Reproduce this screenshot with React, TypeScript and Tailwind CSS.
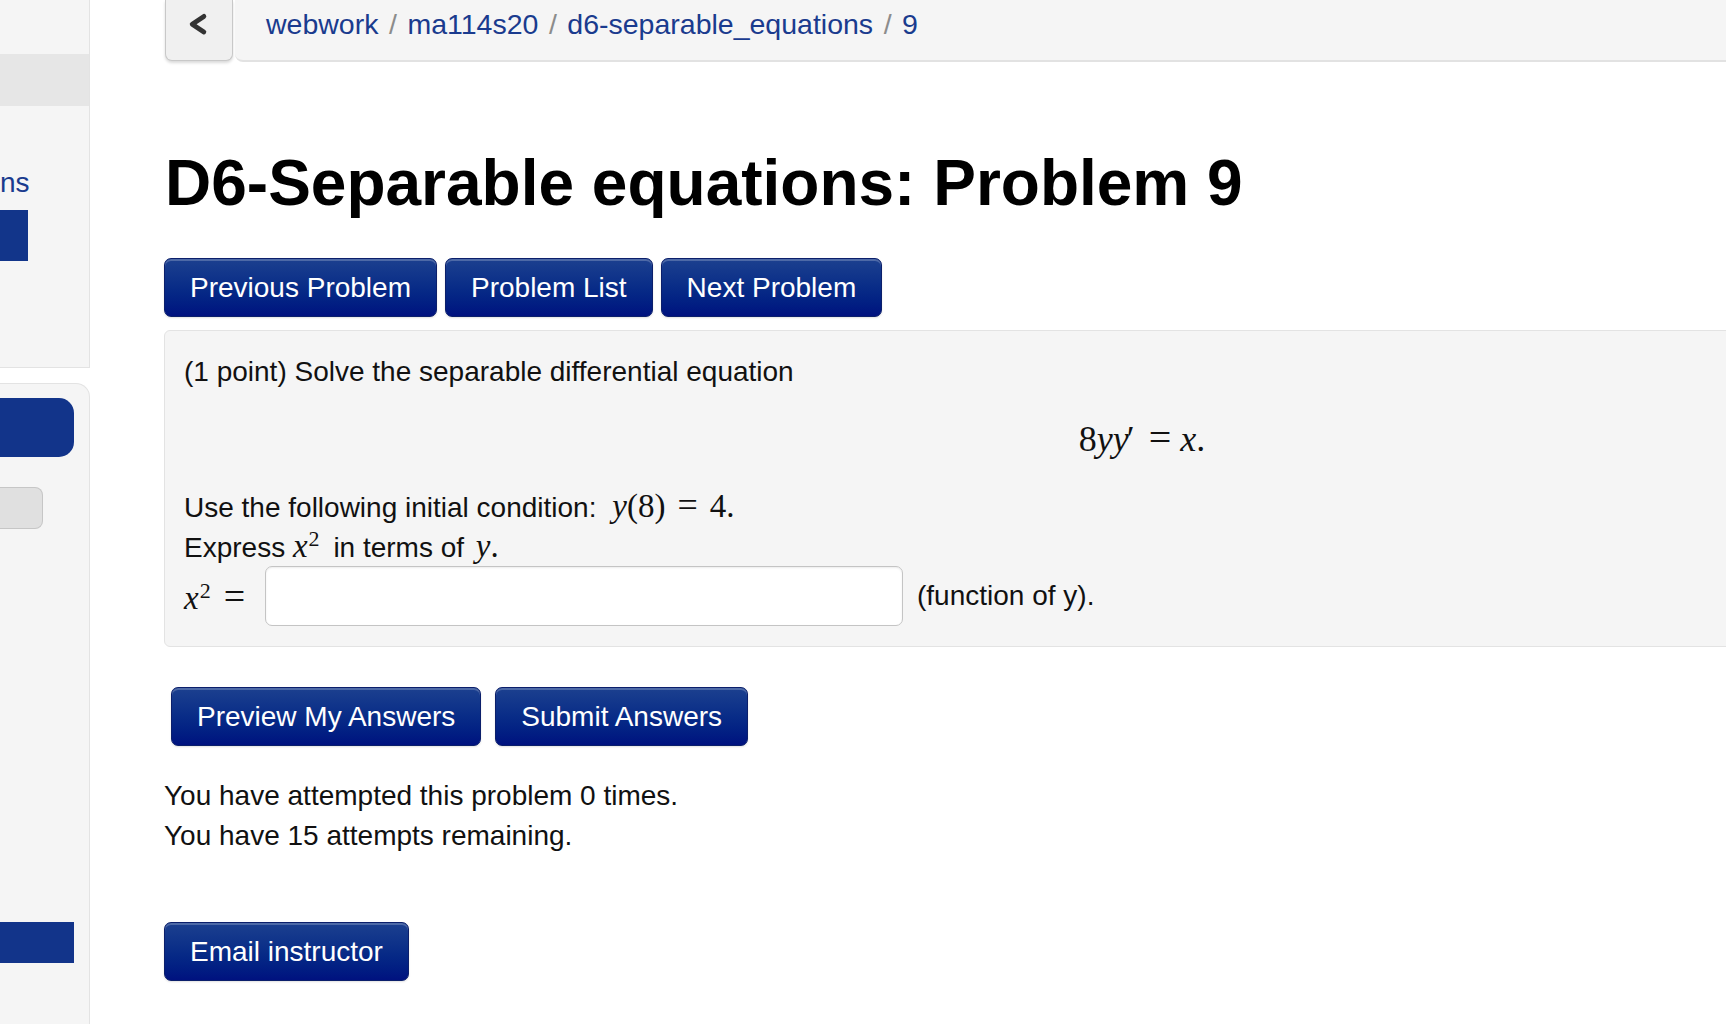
import React from "react";

const sans = "font-['Liberation_Sans',Arial,Helvetica,sans-serif]";
const serif = "font-['Liberation_Serif','Times_New_Roman',serif]";

function NavyButton({ children }: { children: React.ReactNode }) {
  return (
    <button
      className={`${sans} h-[59px] px-[25px] rounded-[7px] border border-[#0b1f6b] bg-linear-to-b from-[#1c408f] to-[#00117f] text-white text-[28px] leading-none shadow-[inset_0_2px_0_rgba(255,255,255,0.22),0_1px_2px_rgba(0,0,0,0.12)] whitespace-nowrap`}
    >
      {children}
    </button>
  );
}

function Sep() {
  return <span className="px-[10.5px] text-[#8c8c8c]">/</span>;
}

function I({ children }: { children: React.ReactNode }) {
  return <span className="italic">{children}</span>;
}

export default function App() {
  return (
    <div className={`${sans} w-[1726px] h-[1024px] overflow-hidden bg-white flex text-[#111]`}>
      {/* Sidebar */}
      <aside className="w-[90px] shrink-0 flex flex-col">
        <div className="h-[368px] bg-[#f5f5f5] border-r border-b border-[#e3e3e3] pt-[54px] flex flex-col">
          <div className="h-[52px] bg-[#e6e6e6]" />
          <div className="mt-[57px] text-[28px] leading-[40px] text-[#1a3b8e]">ns</div>
          <div className="mt-[7px] w-[28px] h-[51px] bg-[#12358a]" />
        </div>
        <div className="mt-[15px] flex-1 bg-[#f5f5f5] border-r border-t border-[#e3e3e3] rounded-tr-[14px] pt-[14px] flex flex-col">
          <div className="w-[74px] h-[59px] bg-[#12348a] rounded-r-[15px]" />
          <div className="mt-[30px] w-[43px] h-[42px] bg-[#e0e0e0] border border-[#c6c6c6] border-l-0 rounded-r-[8px]" />
          <div className="mt-[393px] w-[74px] h-[41px] bg-[#12348a]" />
        </div>
      </aside>

      {/* Main column */}
      <main className="ml-[74px] w-[1956px] shrink-0 flex flex-col">
        {/* Breadcrumb */}
        <div className="flex h-[62px]">
          <div className="ml-[1px] w-[68px] h-[61px] bg-[#f0f0f0] border border-t-0 border-[#c8c8c8] rounded-b-[7px] shadow-[0_2px_3px_rgba(0,0,0,0.15)]">
            <svg viewBox="0 0 68 61" className="w-full h-full">
              <polyline
                points="39,16.5 27,24.5 39,32.5"
                fill="none"
                stroke="#333"
                strokeWidth="5"
                strokeLinecap="round"
                strokeLinejoin="round"
              />
            </svg>
          </div>
          <div className="ml-[2px] flex-1 h-[62px] bg-[#f5f5f5] border-b-2 border-[#e2e2e2] rounded-bl-[8px] pl-[31px] pt-[4px] text-[28.5px] leading-[40px] text-[#1a3b8e] whitespace-nowrap">
            <span>webwork</span>
            <Sep />
            <span>ma114s20</span>
            <Sep />
            <span>d6-separable_equations</span>
            <Sep />
            <span>9</span>
          </div>
        </div>

        {/* Title */}
        <h1 className="mt-[89px] ml-[1px] text-[64px] leading-[64px] font-bold text-black whitespace-nowrap">
          D6-Separable equations: Problem 9
        </h1>

        {/* Nav buttons */}
        <div className="mt-[43px] flex gap-[8px]">
          <NavyButton>Previous Problem</NavyButton>
          <NavyButton>Problem List</NavyButton>
          <NavyButton>Next Problem</NavyButton>
        </div>

        {/* Problem box */}
        <div className="mt-[13px] border border-[#e3e3e3] rounded-[6px] bg-[#f5f5f5] px-[19px] pt-[21px] pb-[20px] text-[28px] leading-[40px]">
          <div>(1 point) Solve the separable differential equation</div>
          <div className={`${serif} h-[95px] leading-[92px] text-center text-[36px] whitespace-nowrap`}>
            8<I>y</I><I>y</I><span className="-ml-[2px]">′</span>
            <span className="ml-[14px] mr-[9px] text-[40px]">=</span>
            <I>x</I>.
          </div>
          <div className="h-[41px]">
            Use the following initial condition:{" "}
            <span className={`${serif} text-[33px] leading-none ml-[8px]`}>
              <I>y</I>(8)<span className="mx-[12px] text-[36px]">=</span>4.
            </span>
          </div>
          <div className="h-[38px]">
            Express{" "}
            <span className={`${serif} text-[33px] leading-none`}>
              <I>x</I>
              <sup className="text-[22px] leading-none ml-[1px]">2</sup>
            </span>{" "}
            <span className="ml-[6px]">in terms of</span>{" "}
            <span className={`${serif} text-[33px] leading-none ml-[4px]`}>
              <I>y</I>.
            </span>
          </div>
          <div className="flex items-center h-[60px]">
            <span className={`${serif} w-[81px] shrink-0 text-[33px] leading-none whitespace-nowrap`}>
              <I>x</I>
              <sup className="text-[22px] leading-none ml-[1px]">2</sup>
              <span className="ml-[13px] text-[38px]">=</span>
            </span>
            <input
              type="text"
              className="w-[638px] h-[60px] bg-white border border-[#c4c4c4] rounded-[7px] shadow-[inset_0_1px_2px_rgba(0,0,0,0.08)] outline-none px-[10px] text-[28px]"
            />
            <span className="ml-[14px]">(function of y).</span>
          </div>
        </div>

        {/* Submit buttons */}
        <div className="mt-[40px] ml-[7px] flex gap-[14px]">
          <NavyButton>Preview My Answers</NavyButton>
          <NavyButton>Submit Answers</NavyButton>
        </div>

        {/* Attempts */}
        <div className="mt-[30px] text-[28px] leading-[40px]">
          <div>You have attempted this problem 0 times.</div>
          <div>You have 15 attempts remaining.</div>
        </div>

        {/* Email */}
        <div className="mt-[66px]">
          <NavyButton>Email instructor</NavyButton>
        </div>
      </main>
    </div>
  );
}
